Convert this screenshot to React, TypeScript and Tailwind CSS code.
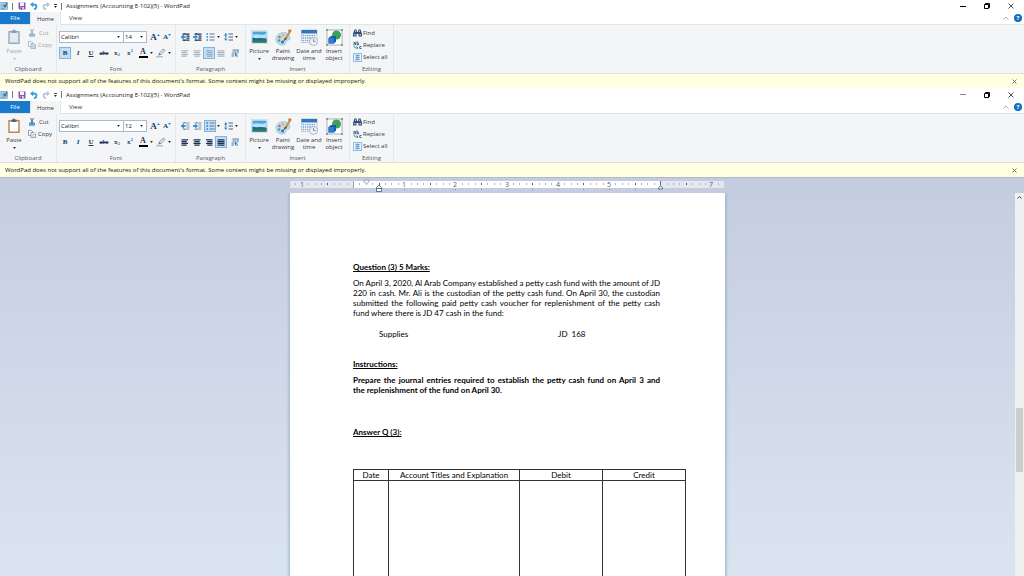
import React from "react";
import clsx from "clsx";

type Align = "left" | "center" | "right" | "justify";

type WindowState = {
  id: string;
  fontSize: string;
  clipboard: boolean;
  bold: boolean;
  list: boolean;
  align: Align;
  dimAlign: boolean;
  active: boolean;
};

const windows: WindowState[] = [
  { id: "back", fontSize: "14", clipboard: false, bold: true, list: false, align: "right", dimAlign: true, active: true },
  { id: "front", fontSize: "12", clipboard: true, bold: false, list: true, align: "justify", dimAlign: false, active: false },
];

/* ---------- Icons ---------- */

function Caret({ dim = false }: { dim?: boolean }) {
  return (
    <svg viewBox="0 0 4 3" className="h-[2px] w-[3px] shrink-0" aria-hidden="true">
      <path d="M0 0h4L2 3z" fill={dim ? "#b0b4ba" : "#222"} />
    </svg>
  );
}

function AppIcon() {
  return (
    <svg viewBox="0 0 16 16" className="h-2 w-2 shrink-0" aria-hidden="true">
      <rect x="0" y="1" width="15" height="14" rx="1" fill="#cfe3f2" stroke="#6aa3cc" strokeWidth="1.5" />
      <path d="M2 4h8M2 7h4M2 10h5M2 13h9" stroke="#4f8fbd" strokeWidth="1.300" />
      <rect x="7" y="5" width="6" height="6" fill="#2f75ad" />
      <path d="M12 1l3 1-2 5-2-1z" fill="#7a6a50" />
    </svg>
  );
}

function SaveIcon() {
  return (
    <svg viewBox="0 0 16 16" className="h-2 w-2" aria-hidden="true">
      <path d="M1 1h14v14H3l-2-2z" fill="#7f5aad" />
      <rect x="4" y="1" width="8" height="7" fill="#f6f2fa" />
      <rect x="4" y="10" width="8" height="5" fill="#d5c6e6" />
      <rect x="5" y="11" width="3" height="4" fill="#5c3b86" />
    </svg>
  );
}

function UndoIcon({ dim = false }: { dim?: boolean }) {
  const color = dim ? "#b4c4d6" : "#2c9be0";
  return (
    <svg viewBox="0 0 16 16" className={clsx("h-2 w-2", dim && "-scale-x-100")} aria-hidden="true">
      <path d="M4 5h5a4 4 0 0 1 4 4c0 3-2 5-5 5.500" fill="none" stroke={color} strokeWidth="3.500" />
      <path d="M0 5 6.500 0v10.500z" fill={color} />
    </svg>
  );
}

function PasteIcon({ enabled }: { enabled: boolean }) {
  return (
    <svg viewBox="0 0 26 32" className="h-4 w-[14px]" aria-hidden="true">
      <rect x="1.500" y="4" width="23" height="26" rx="1" fill={enabled ? "#b98a50" : "#9aacc4"} />
      <rect x="4.500" y="7" width="17" height="20" fill={enabled ? "#fff" : "#e3eaf4"} />
      <path d="M8 3h3c0-3 4-3 4 0h3v5H8z" fill={enabled ? "#5c6470" : "#8b9cb5"} />
    </svg>
  );
}

function CutIcon({ enabled }: { enabled: boolean }) {
  return (
    <svg viewBox="0 0 12 16" className="h-2 w-[6px]" aria-hidden="true">
      <path d="M3 0l5 10M9 0L4 10" stroke={enabled ? "#4c6680" : "#98a8ba"} strokeWidth="2" />
      <circle cx="3" cy="12.500" r="2.200" fill="none" stroke={enabled ? "#2b8ad0" : "#8fa8c2"} strokeWidth="2.200" />
      <circle cx="9" cy="12.500" r="2.200" fill="none" stroke={enabled ? "#2b8ad0" : "#8fa8c2"} strokeWidth="2.200" />
    </svg>
  );
}

function CopyIcon({ enabled }: { enabled: boolean }) {
  const stroke = enabled ? "#7289a3" : "#8fa9c8";
  return (
    <svg viewBox="0 0 16 16" className="h-2 w-2" aria-hidden="true">
      <path d="M1 1h6l2 2v8H1z" fill="#fff" stroke={stroke} strokeWidth="1.500" />
      <path d="M6 5h6l3 3v7H6z" fill={enabled ? "#fff" : "#d3e1f1"} stroke={stroke} strokeWidth="1.500" />
      <path d="M8 9h5M8 12h5" stroke={stroke} />
    </svg>
  );
}

function HighlightIcon() {
  return (
    <svg viewBox="0 0 20 20" className="h-[10px] w-[10px]" aria-hidden="true">
      <path d="M6 11L14 2l4 2.500-8 9z" fill="#dfe8f2" stroke="#6e87a4" strokeWidth="1.500" />
      <path d="M6 11l4 2.500-6 1.500z" fill="#5f7896" />
      <rect x="0" y="16" width="14" height="3" fill="#b9c0ca" />
    </svg>
  );
}

function IndentIcon({ increase = false, dim = false }: { increase?: boolean; dim?: boolean }) {
  const bar = dim ? "#5c7896" : "#1b3554";
  return (
    <svg viewBox="0 0 18 16" className="h-2 w-[9px]" aria-hidden="true">
      <path d="M3 2h14M11 6h6M11 10h6M3 14h14" stroke={bar} strokeWidth={dim ? 1.5 : 2.5} />
      <path d={increase ? "M9 8L5 4v3H0v2h5v3z" : "M0 8l5-4v3h4v2H5v3z"} fill="#1f7fcf" stroke="#1f7fcf" />
      <path d="M6.500 0v2M6.500 14v2" stroke={bar} strokeWidth="2" />
    </svg>
  );
}

function ListIcon() {
  return (
    <svg viewBox="0 0 18 16" className="h-2 w-[9px]" aria-hidden="true">
      <path d="M1 2h3M1 8h3M1 14h3" stroke="#2b83cc" strokeWidth="3" />
      <path d="M7 2h10M7 8h10M7 14h10" stroke="#5c7590" strokeWidth="2" />
    </svg>
  );
}

function SpacingIcon() {
  return (
    <svg viewBox="0 0 18 16" className="h-2 w-[9px]" aria-hidden="true">
      <path d="M3.500 0L7 5H0zM3.500 16L7 11H0zM2.500 4h2v8h-2z" fill="#2b83cc" />
      <path d="M9 2h9M9 8h9M9 14h9" stroke="#42607f" strokeWidth="2" />
    </svg>
  );
}

const alignPaths: Record<Align, string> = {
  left: "M1 2h15M1 6h12M1 10h15M1 14h12",
  center: "M1 2h16M3 6h12M1 10h16M3 14h12",
  right: "M2 2h15M5 6h12M2 10h15M5 14h12",
  justify: "M1 2h16M1 6h16M1 10h16M1 14h16",
};

function AlignIcon({ align, dim }: { align: Align; dim: boolean }) {
  return (
    <svg viewBox="0 0 18 16" className="h-[7px] w-2" aria-hidden="true">
      <path d={alignPaths[align]} stroke={dim ? "#8494a8" : "#1a3352"} strokeWidth={dim ? 1.8 : 3.4} />
    </svg>
  );
}

function ParagraphIcon() {
  return (
    <svg viewBox="0 0 16 16" className="h-2 w-2" aria-hidden="true">
      <path d="M3 2h12M3 6h8M1 10h6M1 14h5" stroke="#5d7896" strokeWidth="2" />
      <path d="M14 2v5l-5 6M9 8v6h5" fill="none" stroke="#2b83cc" strokeWidth="2" />
    </svg>
  );
}

function PictureIcon() {
  return (
    <svg viewBox="0 0 34 32" className="h-4 w-[17px]" aria-hidden="true">
      <rect x="1" y="3" width="32" height="26" fill="#fff" stroke="#b9c3cc" />
      <rect x="3" y="5" width="28" height="22" fill="#49a5dd" />
      <path d="M3 13c8-6 18 2 28-4v9H3z" fill="#b5e2f7" />
      <path d="M3 17l8 2 8-1 12 2v7H3z" fill="#1c6695" />
      <path d="M3 24c9-4 18-1 28-3v6H3z" fill="#2f7c5c" />
    </svg>
  );
}

function PaintIcon() {
  return (
    <svg viewBox="0 0 34 34" className="h-[17px] w-[17px]" aria-hidden="true">
      <path d="M2 20C2 12 9 7 17 7s13 4 13 11c0 5-5 4-7 6s1 7-6 8C8 33 2 28 2 20z" fill="#b9dcf0" stroke="#7fb0d0" />
      <circle cx="9" cy="16" r="2.500" fill="#e0584b" />
      <circle cx="16" cy="12" r="2.500" fill="#f0b429" />
      <circle cx="8" cy="23" r="2.500" fill="#4fae5e" />
      <circle cx="15" cy="26" r="3" fill="#2875c9" />
      <path d="M31 3L21 20" stroke="#d08c4a" strokeWidth="4" />
      <path d="M27 1h6l-1 6-6-2z" fill="#c98242" />
      <path d="M20 17l4 2-8 7z" fill="#6b4a32" />
    </svg>
  );
}

function DateIcon() {
  return (
    <svg viewBox="0 0 34 34" className="h-[17px] w-[17px]" aria-hidden="true">
      <rect x="1" y="2" width="31" height="25" fill="#fff" stroke="#7f9fc0" />
      <rect x="1" y="2" width="31" height="7" fill="#3474b8" />
      <path d="M3 13h27M3 18h27M3 23h27" stroke="#6aa0d6" strokeWidth="3" strokeDasharray="3 1.500" />
      <circle cx="25" cy="25" r="8" fill="#eef2f6" stroke="#9aa6b3" strokeWidth="1.500" />
      <path d="M25 20v5h4" fill="none" stroke="#56677a" strokeWidth="1.500" />
    </svg>
  );
}

function ObjectIcon() {
  return (
    <svg viewBox="0 0 34 34" className="h-[17px] w-[17px]" aria-hidden="true">
      <rect x="2" y="2" width="30" height="30" fill="#fff" stroke="#8c98a5" strokeWidth="1.500" />
      <path d="M0 0h4v4H0zM30 0h4v4h-4zM0 30h4v4H0zM30 30h4v4h-4z" fill="#8c98a5" />
      <circle cx="21" cy="12" r="9" fill="#39a35c" />
      <path d="M5 18l5-4h10v11l-4 4H5z" fill="#1a5aa6" />
      <path d="M5 18h11v11H5z" fill="#2f7fd0" />
    </svg>
  );
}

function FindIcon() {
  return (
    <svg viewBox="0 0 18 16" className="h-2 w-[9px]" aria-hidden="true">
      <path d="M3 1h4l1 5h2l1-5h4l3 9v5h-7v-5H7v5H0v-5z" fill="#2d4f78" />
      <path d="M2 10h3v3H2zM13 10h3v3h-3zM4 3h2v3H4zM12 3h2v3h-2z" fill="#a9c2de" />
    </svg>
  );
}

function ReplaceIcon() {
  return (
    <svg viewBox="0 0 18 16" className="h-2 w-[9px]" aria-hidden="true">
      <path d="M1 3h4v5H2.500a1.500 1.500 0 0 1 0-3H5" fill="none" stroke="#35577f" strokeWidth="1.600" />
      <path d="M8 0v8M8 4h3v4H8" fill="none" stroke="#35577f" strokeWidth="1.600" />
      <path d="M2 10c0 3 2 4 6 4M7 11l3 3-3 2" fill="none" stroke="#3b9b62" strokeWidth="2" />
      <path d="M17 11h-3.500v4H17" fill="none" stroke="#2b6bb0" strokeWidth="2" />
    </svg>
  );
}

function SelectAllIcon() {
  return (
    <svg viewBox="0 0 18 18" className="h-[9px] w-[9px]" aria-hidden="true">
      <rect x="1" y="1" width="16" height="16" fill="none" stroke="#2f83cf" strokeWidth="2" strokeDasharray="2 2" />
      <path d="M5 5h8M5 9h8M5 13h8" stroke="#5f9fdc" strokeWidth="3" />
    </svg>
  );
}

/* ---------- Ribbon ---------- */

function Group({ label, className, children }: { label: string; className: string; children: React.ReactNode }) {
  return (
    <section
      aria-label={label}
      className={clsx("flex h-[48px] shrink-0 flex-col justify-between border-r border-[#e3e6ea]", className)}
    >
      <div className="pt-[2px]">{children}</div>
      <div className="h-2 text-center leading-[8px] text-[#55585e]">{label}</div>
    </section>
  );
}

function Tool({
  label,
  pressed = false,
  className = "w-3",
  children,
}: {
  label: string;
  pressed?: boolean;
  className?: string;
  children: React.ReactNode;
}) {
  return (
    <button
      type="button"
      aria-label={label}
      aria-pressed={pressed}
      className={clsx(
        "flex h-3 shrink-0 items-center justify-center gap-[2px] text-[7px] leading-none text-[#20395a]",
        pressed && "bg-[#c3def5] outline outline-1 -outline-offset-1 outline-[#7fb2e0]",
        className,
      )}
    >
      {children}
    </button>
  );
}

function Picker({ label, value, className }: { label: string; value: string; className: string }) {
  return (
    <label className={clsx("flex h-3 items-center border border-[#a9b9d2] bg-white pr-[3px]", className)}>
      <select aria-label={label} defaultValue={value} className="min-w-0 flex-1 appearance-none pl-px leading-[8px] text-[#222] outline-none">
        <option>{value}</option>
      </select>
      <Caret />
    </label>
  );
}

function InsertButton({ lines, caret = false, className, children }: { lines: string[]; caret?: boolean; className: string; children: React.ReactNode }) {
  return (
    <button type="button" className={clsx("flex flex-col items-center leading-[7px] text-[#33363b]", className)}>
      <span className="flex h-[19px] items-start">{children}</span>
      {lines.map((line) => (
        <span key={line} className="whitespace-nowrap">{line}</span>
      ))}
      {caret && <span className="flex h-[7px] items-center"><Caret /></span>}
    </button>
  );
}

function EditButton({ label, children }: { label: string; children: React.ReactNode }) {
  return (
    <button type="button" className="flex h-3 items-center gap-px whitespace-nowrap text-[#33363b]">
      {children}
      <span>{label}</span>
    </button>
  );
}

function Ribbon({ win }: { win: WindowState }) {
  const clip = win.clipboard ? "text-[#33363b]" : "text-[#a0a4aa]";
  return (
    <div className="flex h-[49px] border-b border-[#dcdfe4] bg-[#f4f5f7]">
      <Group label="Clipboard" className="w-[57px]">
        <div className={clsx("flex gap-1 pl-1", clip)}>
          <button type="button" disabled={!win.clipboard} className="flex w-5 flex-col items-center pt-[2px] leading-[7px]">
            <span className="flex h-[19px] items-start"><PasteIcon enabled={win.clipboard} /></span>
            <span>Paste</span>
            <span className="flex h-[7px] items-center"><Caret dim={!win.clipboard} /></span>
          </button>
          <div>
            <button type="button" disabled={!win.clipboard} className="flex h-3 items-center gap-1 pl-px">
              <CutIcon enabled={win.clipboard} />
              Cut
            </button>
            <button type="button" disabled={!win.clipboard} className="flex h-3 items-center gap-[2px]">
              <CopyIcon enabled={win.clipboard} />
              Copy
            </button>
          </div>
        </div>
      </Group>

      <Group label="Font" className="w-[119px]">
        <div className="space-y-1 pt-1 pl-[2px]">
          <div className="flex">
            <Picker label="Font family" value="Calibri" className="w-[65px]" />
            <Picker label="Font size" value={win.fontSize} className="-ml-px w-6" />
            <div className="ml-[2px] flex font-['Liberation_Serif'] font-bold">
              <Tool label="Grow font">
                <span className="text-[9px]">A</span>
                <svg viewBox="0 0 3 2" className="-ml-[2px] mb-1 h-[2px] w-[3px]" aria-hidden="true"><path d="M0 2h3L1.500 0z" fill="#2b83cc" /></svg>
              </Tool>
              <Tool label="Shrink font">
                A
                <svg viewBox="0 0 3 2" className="-ml-[2px] mb-1 h-[2px] w-[3px]" aria-hidden="true"><path d="M0 0h3L1.500 2z" fill="#2b83cc" /></svg>
              </Tool>
            </div>
          </div>
          <div className="flex gap-px font-['Liberation_Serif']">
            <Tool label="Bold" pressed={win.bold}><b>B</b></Tool>
            <Tool label="Italic"><b><i>I</i></b></Tool>
            <Tool label="Underline"><u className="font-bold">U</u></Tool>
            <Tool label="Strikethrough"><s className="text-[6px] font-bold">abc</s></Tool>
            <Tool label="Subscript"><b>x<sub className="text-[5px] text-[#2b83cc]">2</sub></b></Tool>
            <Tool label="Superscript"><b>x<sup className="text-[5px] text-[#2b83cc]">2</sup></b></Tool>
            <Tool label="Text color" className="w-[17px]">
              <span className="flex h-[9px] w-[9px] items-center justify-center border-b-2 border-black text-[8px] font-bold">A</span>
              <Caret />
            </Tool>
            <Tool label="Text highlight color" className="w-[17px]">
              <HighlightIcon />
              <Caret />
            </Tool>
          </div>
        </div>
      </Group>

      <Group label="Paragraph" className="w-[70px]">
        <div className="space-y-1 pt-1 pl-[3px]">
          <div className="flex">
            <Tool label="Decrease indent"><IndentIcon dim={win.list} /></Tool>
            <Tool label="Increase indent"><IndentIcon increase dim={win.list} /></Tool>
            <Tool label="Start a list" pressed={win.list} className="ml-px w-3"><ListIcon /></Tool>
            <Tool label="List styles" className="w-1"><Caret /></Tool>
            <Tool label="Line spacing" className="ml-[3px] w-4"><SpacingIcon /><Caret /></Tool>
          </div>
          <div className="flex">
            {(["left", "center", "right", "justify"] as Align[]).map((align) => (
              <Tool key={align} label={"Align " + align} pressed={win.align === align}>
                <AlignIcon align={align} dim={win.dimAlign} />
              </Tool>
            ))}
            <Tool label="Paragraph settings" className="ml-[2px] w-3"><ParagraphIcon /></Tool>
          </div>
        </div>
      </Group>

      <Group label="Insert" className="w-[104px]">
        <div className="flex pt-[2px] pl-px">
          <InsertButton lines={["Picture"]} caret className="w-6"><PictureIcon /></InsertButton>
          <InsertButton lines={["Paint", "drawing"]} className="w-6"><PaintIcon /></InsertButton>
          <InsertButton lines={["Date and", "time"]} className="w-7"><DateIcon /></InsertButton>
          <InsertButton lines={["Insert", "object"]} className="w-[22px]"><ObjectIcon /></InsertButton>
        </div>
      </Group>

      <Group label="Editing" className="w-[44px]">
        <div className="pl-[3px]">
          <EditButton label="Find"><FindIcon /></EditButton>
          <EditButton label="Replace"><ReplaceIcon /></EditButton>
          <EditButton label="Select all"><SelectAllIcon /></EditButton>
        </div>
      </Group>
    </div>
  );
}

function WindowHeader({ win }: { win: WindowState }) {
  return (
    <header className="bg-white text-[6px] leading-[8px]">
      <div className={clsx("flex items-center justify-between", win.active ? "h-3" : "h-[13px]")}>
        <div className="flex items-center">
          <AppIcon />
          <span className="ml-1 h-[7px] w-px bg-[#777]" />
          <div className="ml-[5px] flex items-center gap-1">
            <button type="button" aria-label="Save"><SaveIcon /></button>
            <button type="button" aria-label="Undo"><UndoIcon /></button>
            <button type="button" aria-label="Redo"><UndoIcon dim /></button>
            <button type="button" aria-label="Customize toolbar" className="flex h-2 flex-col items-center justify-center gap-px">
              <span className="h-px w-[3px] bg-[#444]" />
              <Caret />
            </button>
          </div>
          <span className="ml-1 h-[7px] w-px bg-[#777]" />
          <h1 className="ml-1 whitespace-nowrap text-[#222]">Assignment (Accounting E-102)(5) - WordPad</h1>
        </div>
        <div className="flex text-black">
          <button type="button" aria-label="Minimize" className="flex w-6 items-center justify-center">
            <span className={clsx("h-px w-[6px]", win.active ? "bg-black" : "bg-[#888]")} />
          </button>
          <button type="button" aria-label="Restore" className="flex w-6 items-center justify-center">
            <svg viewBox="0 0 6 6" className="h-[6px] w-[6px]" aria-hidden="true">
              <path d="M1.500 1.500V.5h4v4h-1M.5 1.500h4v4h-4z" fill="none" stroke="#000" />
            </svg>
          </button>
          <button type="button" aria-label="Close" className="mr-px flex w-6 items-center justify-center">
            <svg viewBox="0 0 6 6" className="h-[6px] w-[6px]" aria-hidden="true">
              <path d="M.5.5l5 5M5.500.5l-5 5" stroke="#222" strokeWidth=".8" />
            </svg>
          </button>
        </div>
      </div>

      <div className="flex h-[13px] items-stretch border-b border-[#e1e4e8]">
        <button type="button" className="w-[30px] bg-[#1979ca] text-white">File</button>
        <button type="button" className="-mb-px w-[31px] border-x border-[#e1e4e8] bg-[#f4f5f7] text-[#333]">Home</button>
        <button type="button" className="w-[29px] text-[#333]">View</button>
        <div className="ml-auto flex items-center gap-[5px] pr-[2px]">
          <button type="button" aria-label="Collapse ribbon">
            <svg viewBox="0 0 6 4" className="h-1 w-[6px]" aria-hidden="true">
              <path d="M.5 3.500L3 1l2.500 2.500" fill="none" stroke="#999" strokeWidth=".8" />
            </svg>
          </button>
          <button type="button" aria-label="Help" className="h-2 w-2 rounded-full bg-[#0f6fc5] text-center font-bold text-white">?</button>
        </div>
      </div>

      <Ribbon win={win} />

      <div role="status" className="flex h-[14px] items-center justify-between bg-[#ffffe1] pr-[7px] pl-[5px] text-[#111]">
        <p className="whitespace-nowrap">
          WordPad does not support all of the features of this document's format. Some content might be missing or displayed improperly.
        </p>
        <button type="button" aria-label="Dismiss">
          <svg viewBox="0 0 5 5" className="h-[5px] w-[5px]" aria-hidden="true">
            <path d="M.5.5l4 4M4.500.5l-4 4" stroke="#666" strokeWidth=".9" />
          </svg>
        </button>
      </div>
    </header>
  );
}

/* ---------- Ruler ---------- */

const ORIGIN = 63;
const INCH = 51.2;

function Ruler() {
  const ticks: number[] = [];
  for (let i = -9; i <= 57; i++) ticks.push(i);

  return (
    <svg viewBox="0 0 435 15" className="h-[15px] w-[435px]" aria-label="Ruler">
      <rect x="0" y="3" width="434" height="7" fill="#e4e7ee" />
      <rect x={ORIGIN} y="3" width="308" height="7" fill="#fff" />
      <path d="M63.500 3v7" stroke="#9aa5b8" />
      {ticks.map((i) => {
        const x = Math.round(ORIGIN + (i * INCH) / 8);
        if (i % 8 === 0) {
          if (i === 0 || i === 48) return null;
          return (
            <text key={i} x={x} y="9" textAnchor="middle" fontSize="7" fill="#4a5c80">
              {Math.abs(i / 8)}
            </text>
          );
        }
        return <rect key={i} x={x} y="5" width="1" height="2" fill={i % 4 === 0 ? "#4a5c80" : "#a9b3c4"} />;
      })}
      {ticks
        .filter((i) => i >= 8 && i < 48 && i % 4 === 0)
        .map((i) => (
          <rect key={i} x={Math.round(ORIGIN + (i * INCH) / 8)} y="11" width="1" height="1" fill="#8794ac" />
        ))}
      <path d="M74 2h5v2l-2.500 2L74 4z" fill="#eef1f6" stroke="#8794ac" strokeWidth=".7" />
      <path d="M86.500 9.500L89 7l2.500 2.500v4h-5zM86.500 10.500h5" fill="#fff" stroke="#5a6f92" />
      <path d="M370.500 3v4M368.500 10l2-2.500 2 2.500v1h-4z" fill="#fff" stroke="#5a6f92" />
    </svg>
  );
}

/* ---------- Document ---------- */

function Document() {
  return (
    <article className="mx-auto h-full w-[435px] bg-white pt-[69px] pr-[65px] pl-[63px] font-['Lato'] text-[8px] leading-[10px] text-black shadow-[0_0_3px_1px_#9dabc3]">
      <h2 className="font-bold underline">Question (3) 5 Marks:</h2>
      <p className="mt-[6px] whitespace-nowrap">
        <span className="block [text-align-last:justify]">On April 3, 2020, Al Arab Company established a petty cash fund with the amount of JD</span>
        <span className="block [text-align-last:justify]">220 in cash. Mr. Ali is the custodian of the petty cash fund. On April 30, the custodian</span>
        <span className="block [text-align-last:justify]">submitted the following paid petty cash voucher for replenishment of the petty cash</span>
        <span className="block">fund where there is JD 47 cash in the fund:</span>
      </p>
      <p className="mt-[11px] flex pl-[26px]">
        <span className="w-[179px]">Supplies</span>
        <span className="whitespace-pre">JD  168</span>
      </p>
      <h2 className="mt-5 font-bold underline">Instructions:</h2>
      <p className="mt-[6px] font-bold whitespace-nowrap">
        <span className="block [text-align-last:justify]">Prepare the journal entries required to establish the petty cash fund on April 3 and</span>
        <span className="block">the replenishment of the fund on April 30.</span>
      </p>
      <h2 className="mt-8 font-bold underline">Answer Q (3):</h2>
      <table className="mt-8 w-[333px] table-fixed border-collapse text-center">
        <colgroup>
          <col className="w-[35px]" />
          <col className="w-[131px]" />
          <col />
          <col />
        </colgroup>
        <thead>
          <tr className="h-[11px]">
            {["Date", "Account Titles and Explanation", "Debit", "Credit"].map((name) => (
              <th key={name} scope="col" className="border border-[#333] p-0 font-normal whitespace-nowrap">{name}</th>
            ))}
          </tr>
        </thead>
        <tbody>
          <tr className="h-32">
            <td className="border border-[#333]" />
            <td className="border border-[#333]" />
            <td className="border border-[#333]" />
            <td className="border border-[#333]" />
          </tr>
        </tbody>
      </table>
    </article>
  );
}

export default function App() {
  return (
    <div className="flex h-screen flex-col overflow-hidden bg-white font-['Open_Sans','Noto_Sans',sans-serif]">
      {windows.map((win) => (
        <WindowHeader key={win.id} win={win} />
      ))}

      <div className="flex h-4 shrink-0 justify-center border-t border-[#b4b9c4] bg-[#c4cde0] pr-[9px]">
        <Ruler />
      </div>

      <main className="flex min-h-0 flex-1 bg-gradient-to-b from-[#c5cee0] to-[#dae4f1]">
        <div className="min-w-0 flex-1 overflow-hidden">
          <Document />
        </div>
        <div className="flex w-[9px] flex-col items-center bg-[#f0f0f0]">
          <button type="button" aria-label="Scroll up" className="flex h-2 w-full items-center justify-center">
            <svg viewBox="0 0 5 4" className="h-1 w-[5px]" aria-hidden="true">
              <path d="M.5 3.500l2-2 2 2" fill="none" stroke="#444" />
            </svg>
          </button>
          <div className="grow-[207]" />
          <div className="w-[7px] grow-[64] bg-[#cdcdcd]" />
          <div className="grow-[104]" />
        </div>
      </main>
    </div>
  );
}
